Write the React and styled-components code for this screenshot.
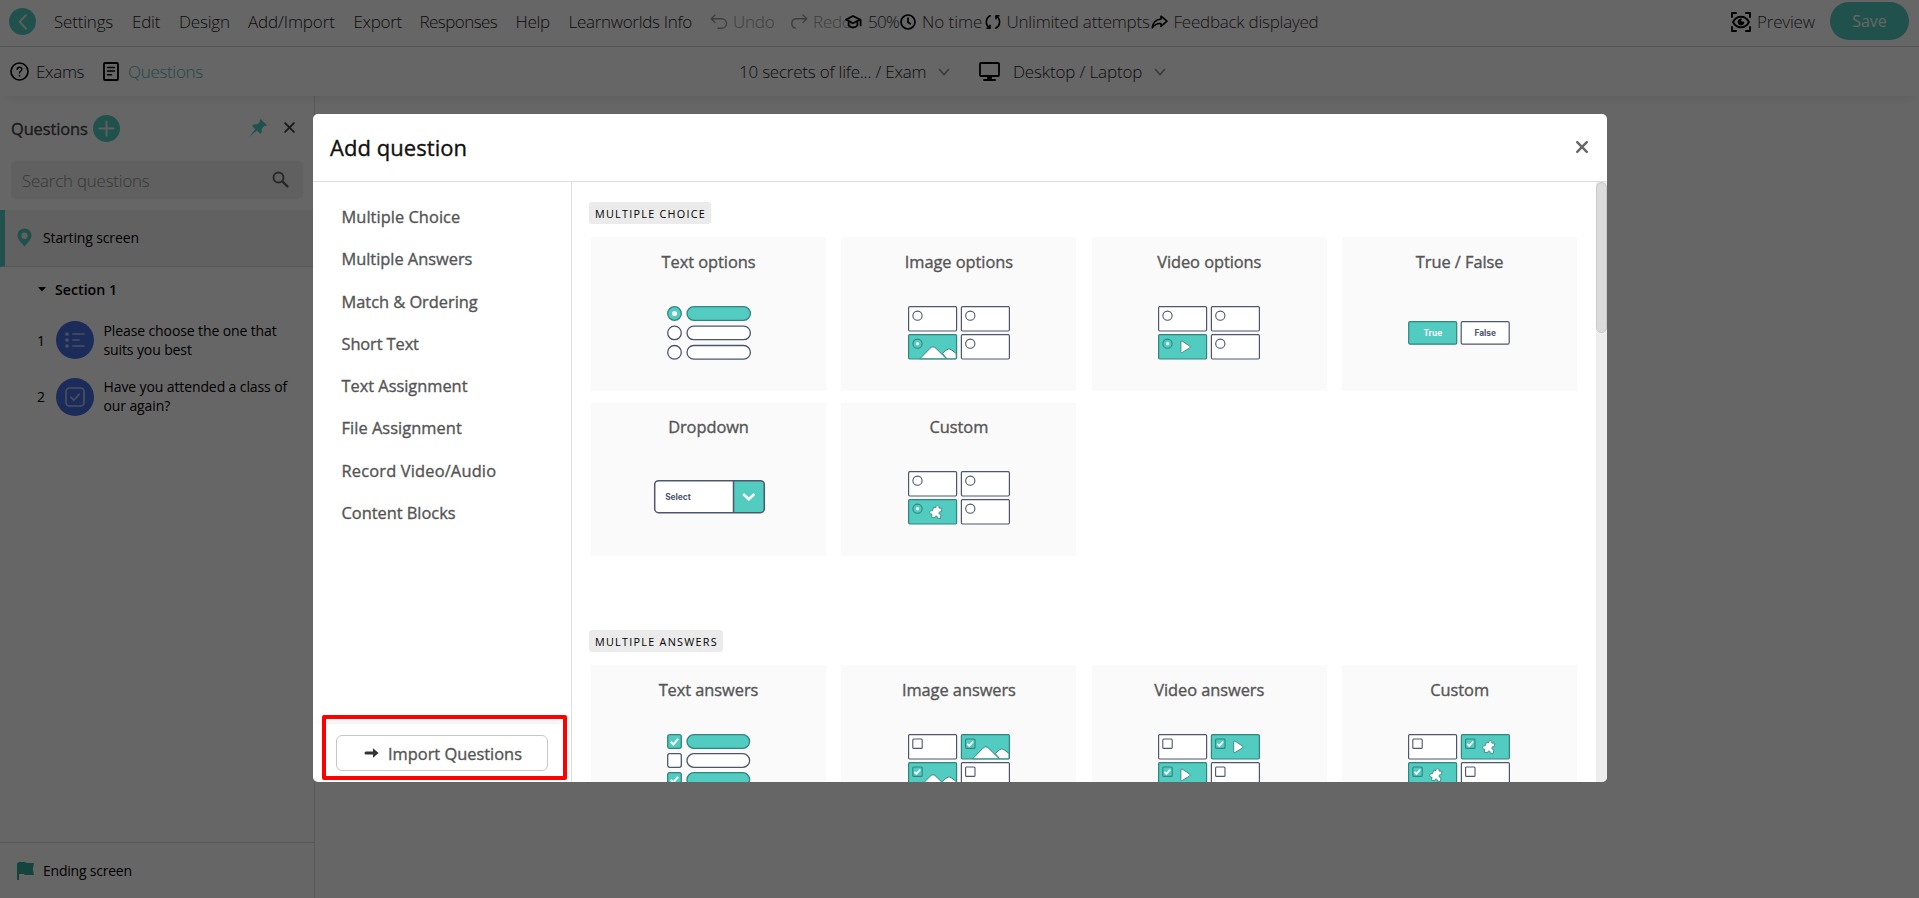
import React from "react";
import styled, { createGlobalStyle, css } from "styled-components";

const teal = "#52cbc0";
const tealDark = "#31857e";
const ink = "#4d566b";

const GlobalStyle = createGlobalStyle`
  *, *::before, *::after { box-sizing: border-box; }
  html, body { margin: 0; padding: 0; background: #fff; }
  body {
    font-family: "Open Sans", "Noto Sans", "Liberation Sans", sans-serif;
    overflow: hidden;
  }
  svg { display: block; flex: none; overflow: visible; }
`;

const medium = css`
  font-weight: 400;
  -webkit-text-stroke: 0.35px currentColor;
`;

/* ---------- page ---------- */
const Page = styled.div`
  position: relative;
  display: flex;
  flex-direction: column;
  width: 1919px;
  height: 898px;
  background: #fff;
  overflow: hidden;
`;

const TopBar = styled.header`
  display: flex;
  align-items: center;
  height: 47px;
  padding: 0 10px 3px 9px;
  border-bottom: 1px solid #d4d4d4;
  font-weight: 300;
  font-size: 17px;
`;

const RoundButton = styled.span`
  display: flex;
  flex: none;
  align-items: center;
  justify-content: center;
  width: 27px;
  height: 27px;
  border-radius: 50%;
  background: ${teal};
`;

const Menu = styled.nav`
  display: flex;
  align-items: center;
  flex: none;
  gap: 19px;
  width: 809px;
  padding-left: 18px;
`;

const MenuItem = styled.span`
  flex: none;
  width: ${(p) => p.$w}px;
  white-space: nowrap;
  letter-spacing: ${(p) => p.$track ?? -0.2}px;
  color: #1c1c1c;
`;

const HistoryItem = styled(MenuItem)`
  display: flex;
  align-items: center;
  gap: 5px;
  color: #9c9c9c;
`;

const Facts = styled.div`
  display: flex;
  align-items: center;
  flex: 1;
`;

const Fact = styled.span`
  display: flex;
  align-items: center;
  flex: none;
  gap: 6px;
  width: ${(p) => p.$w}px;
  white-space: nowrap;
  letter-spacing: ${(p) => p.$track ?? -0.2}px;
  color: #333;
  svg { color: #000; }
`;

const Preview = styled(Fact)`
  margin-right: 13px;
`;

const SaveButton = styled.button`
  flex: none;
  width: 79px;
  height: 38px;
  margin-top: -1px;
  border: 0;
  border-radius: 19px;
  background: ${teal};
  color: #fff;
  font: inherit;
  font-weight: 400;
  font-size: 16px;
`;

const SubBar = styled.div`
  position: relative;
  display: flex;
  align-items: center;
  height: 49px;
  padding-left: 10px;
  box-shadow: 0 9px 8px -7px rgba(0, 0, 0, 0.1);
  font-weight: 300;
  font-size: 17px;
`;

const Tab = styled.span`
  display: flex;
  align-items: center;
  flex: none;
  gap: ${(p) => p.$gap}px;
  width: ${(p) => p.$w}px;
  white-space: nowrap;
  letter-spacing: -0.32px;
  color: ${(p) => (p.$active ? "#55b5ad" : "#1c1c1c")};
  svg { color: #000; }
`;

const Pickers = styled.div`
  display: flex;
  align-items: center;
  margin-left: 514.5px;
`;

const Picker = styled.span`
  display: flex;
  align-items: center;
  flex: none;
  width: ${(p) => p.$w}px;
  white-space: nowrap;
  letter-spacing: ${(p) => p.$track}px;
  color: #1c1c1c;
  svg:first-child { margin-right: 13px; color: #000; }
  svg:last-child { margin-left: 12px; }
`;

const Workspace = styled.div`
  display: flex;
  flex: 1;
  min-height: 0;
`;

/* ---------- questions panel ---------- */
const Panel = styled.aside`
  display: flex;
  flex-direction: column;
  width: 315px;
  border-right: 1px solid #dcdcdc;
`;

const PanelHead = styled.div`
  display: flex;
  align-items: center;
  height: 65px;
  padding: 0 19px 0 11px;
`;

const PanelTitle = styled.span`
  ${medium}
  width: 82px;
  font-size: 16.4px;
  letter-spacing: -0.1px;
  color: #444;
`;

const PanelTools = styled.span`
  display: flex;
  align-items: center;
  gap: 17px;
  margin-left: auto;
  padding-bottom: 2px;
`;

const SearchBox = styled.div`
  display: flex;
  align-items: center;
  justify-content: space-between;
  height: 38px;
  margin: 0 11px;
  padding: 0 14px 0 11px;
  border-radius: 5px;
  background: #efefef;
  font-weight: 300;
  font-size: 16.8px;
  letter-spacing: -0.15px;
  color: #8c8c8c;
`;

const StartRow = styled.div`
  display: flex;
  align-items: center;
  gap: 11px;
  height: 57px;
  margin-top: 11px;
  padding: 0 0 2px 12px;
  border-left: 5px solid ${teal};
  border-bottom: 1px solid #d8d8d8;
  background: #f2f2f2;
  font-size: 14px;
  letter-spacing: -0.14px;
`;

const SectionRow = styled.div`
  display: flex;
  align-items: center;
  gap: 9px;
  height: 45px;
  padding-left: 38px;
  font-weight: 600;
  font-size: 14.2px;
`;

const QuestionRow = styled.div`
  display: flex;
  align-items: center;
  height: 56.5px;
  font-size: 14px;
  line-height: 19px;
  letter-spacing: -0.11px;
`;

const QuestionNumber = styled.span`
  width: 56px;
  padding-left: 37px;
`;

const QuestionIcon = styled.span`
  display: flex;
  flex: none;
  align-items: center;
  justify-content: center;
  width: 38px;
  height: 38px;
  margin-right: 9.5px;
  border-radius: 50%;
  background: #466ee0;
`;

const QuestionText = styled.span`
  width: 192px;
  margin-top: -1px;
  white-space: nowrap;
`;

const EndRow = styled.div`
  display: flex;
  align-items: center;
  gap: 9px;
  height: 56px;
  margin-top: auto;
  padding-left: 17px;
  border-top: 1px solid #dcdcdc;
  font-size: 14px;
  font-weight: 400;
  letter-spacing: -0.22px;
`;

/* ---------- dialog ---------- */
const Backdrop = styled.div`
  position: absolute;
  inset: 0;
  padding: 114px 0 0 313px;
  background: rgba(0, 0, 0, 0.6);
`;

const Dialog = styled.section`
  position: relative;
  display: flex;
  flex-direction: column;
  width: 1294px;
  height: 668px;
  border-radius: 5px;
  background: #fff;
`;

const DialogHead = styled.div`
  display: flex;
  align-items: center;
  justify-content: space-between;
  height: 68px;
  padding: 0 19px 2px 17px;
  border-bottom: 1px solid #dedede;
`;

const DialogTitle = styled.h2`
  ${medium}
  margin: 0;
  font-size: 22px;
  letter-spacing: 0.05px;
  color: #111;
`;

const DialogBody = styled.div`
  display: flex;
  flex: 1;
  min-height: 0;
`;

const Categories = styled.div`
  display: flex;
  flex-direction: column;
  width: 259px;
  border-right: 1px solid #dedede;
`;

const CategoryList = styled.ul`
  display: flex;
  flex-direction: column;
  flex: 1;
  margin: 0;
  padding: 14px 0 0 28.5px;
  list-style: none;
`;

const Category = styled.li`
  ${medium}
  height: 42.25px;
  font-size: 16.4px;
  line-height: 42px;
  letter-spacing: ${(p) => p.$track ?? 0.05}px;
  color: #555;
`;

const CategoriesFoot = styled.div`
  height: 58px;
  padding: 11px 23px 0;
  box-shadow: 0 -9px 8px -7px rgba(0, 0, 0, 0.07);
`;

const ImportButton = styled.button`
  ${medium}
  display: flex;
  align-items: center;
  gap: 9px;
  width: 212px;
  height: 36px;
  padding: 0 0 0 28px;
  border: 1px solid #c8c8c8;
  border-radius: 6px;
  background: #fff;
  font-family: inherit;
  font-size: 16.4px;
  color: #555;
`;

const Highlight = styled.div`
  position: absolute;
  left: 9px;
  top: 601px;
  width: 245px;
  height: 65px;
  border: 4px solid #fe0000;
  border-radius: 2px;
`;

const Catalog = styled.div`
  display: flex;
  flex-direction: column;
  gap: 74px;
  flex: 1;
  padding: 20px 19px 0 17px;
  overflow: hidden;
`;

const Group = styled.div`
  display: flex;
  flex-direction: column;
  align-items: flex-start;
  gap: 13px;
`;

const GroupLabel = styled.span`
  height: 22px;
  padding: 1px 5px 0 6px;
  border-radius: 3px;
  background: #ebebeb;
  font-size: 10.8px;
  line-height: 22px;
  letter-spacing: 1.27px;
  white-space: nowrap;
  color: #000;
`;

const CardGrid = styled.div`
  display: grid;
  grid-template-columns: repeat(4, 235px);
  grid-template-rows: 154px;
  grid-auto-rows: 153px;
  column-gap: 15.4px;
  row-gap: 12px;
  padding-left: 2px;
`;

const Card = styled.div`
  display: flex;
  flex-direction: column;
  align-items: center;
  background: #fafafa;
`;

const CardTitle = styled.span`
  ${medium}
  height: ${(p) => (p.$row === 0 ? 69 : 68)}px;
  padding-top: ${(p) => (p.$row === 0 ? 13 : 12)}px;
  font-size: 16.4px;
  line-height: 23px;
  letter-spacing: -0.05px;
  color: #555;
`;

const ScrollTrack = styled.div`
  width: 11px;
  border-bottom-right-radius: 5px;
  background: #ededed;
`;

const ScrollThumb = styled.div`
  height: 151px;
  border: 1px solid #c9c9c9;
  border-radius: 6px;
  background: #dbdbdb;
`;

/* ---------- small icons ---------- */
const Line = ({ w, h, sw = 1.8, children, color = "currentColor" }) => (
  <svg width={w} height={h} viewBox={`0 0 ${w} ${h}`} fill="none" stroke={color} strokeWidth={sw} strokeLinecap="round" strokeLinejoin="round">
    {children}
  </svg>
);

const Back = () => <Line w={10} h={16} sw={2} color="#e8eded"><path d="M8 1.2 1.6 7.6 8 14.6" /></Line>;
const Plus = () => <Line w={15} h={15} sw={2} color="#e8eded"><path d="M7.5.5v14M.5 7.5h14" /></Line>;
const Undo = () => <Line w={18} h={16} sw={1.4}><path d="M5 1 1.2 4.8 5 8.6M1.4 4.8h10.4a4.7 4.7 0 0 1 0 9.4H8" /></Line>;
const Redo = () => <Line w={18} h={16} sw={1.4}><path d="M13 1l3.8 3.8L13 8.6M16.6 4.8H6.2a4.7 4.7 0 0 0-1 9.2" /></Line>;
const Cap = () => <Line w={17} h={14} sw={1.8}><path d="M8 1 1 4.6l7 3.6 7-3.6zM3.6 6.2v4.2C5.6 13.2 10.4 13.2 12.4 10.4V6.2M15.6 5v5.4" /></Line>;
const Clock = () => <Line w={16} h={16} sw={1.7}><circle cx="8" cy="8" r="7" /><path d="M8 4v4.2l2.3 1.6" /></Line>;
const Cycle = () => <Line w={16} h={16} sw={1.6}><path d="M5.2 1.8A6.8 6.8 0 0 0 4.4 13.6M2 14.2h3v-3M10.6 14.2A6.8 6.8 0 0 0 11.6 2.4M14 1.8h-3v3" /></Line>;
const Share = () => <Line w={17} h={14} sw={1.6}><path d="M10 1.2l6 5-6 5.2V8.6C6.2 8.2 3.6 9.6 1.2 12.8 1.7 8.2 4.8 4.6 10 4z" /></Line>;
const Eye = () => (
  <Line w={20} h={20} sw={1.9}>
    <path d="M1 5V1h4M15 1h4v4M19 15v4h-4M5 19H1v-4" />
    <path d="M2 10c3.6-7 12.4-7 16 0-3.6 7-12.4 7-16 0z" />
    <path d="M10 7v3h3a3 3 0 1 1-3-3z" fill="currentColor" strokeWidth="0.8" />
  </Line>
);
const Help = () => (
  <Line w={19} h={19} sw={1.7}>
    <circle cx="9.5" cy="9.5" r="8.5" />
    <path d="M7.2 7.4c.2-3 4.8-2.8 4.6.1-.1 1.6-2.3 1.700-2.300 3.500" strokeWidth="1.4" />
    <circle cx="9.500" cy="13.700" r=".3" strokeWidth="1.2" />
  </Line>
);
const Sheet = () => <Line w={16} h={19} sw={1.8}><rect x="1" y="1" width="14" height="17" rx="1" /><path d="M4.5 5.500h7M4.500 9h7M4.500 12.700h4" strokeWidth="1.5" /></Line>;
const Monitor = () => (
  <Line w={21} h={19} sw={1.8}>
    <rect x="1" y="1" width="19" height="13" rx="1" />
    <path d="M5 18h11" />
    <path d="M9 15.500h3v2H9z" fill="currentColor" />
  </Line>
);
const Chevron = () => <svg width="12" height="8" viewBox="0 0 12 8" fill="none" stroke="#999" strokeWidth="1.8"><path d="M1 1l5 5.600L11 1" /></svg>;
const Pin = () => (
  <svg width="18" height="18" viewBox="0 0 18 18" fill={teal}>
    <path d="M11.500 0 18 6.200l-1.700 1.100-1-.2-2.700 2.900c.5 2 .2 3.500-1.200 4.900L7.900 11.400.3 17.900 6.300 10 2.900 6.700c1.500-1.300 3.200-1.600 5-1.100l2.900-2.700-.3-1.200z" />
  </svg>
);
const Cross = ({ size, sw, color }) => (
  <svg width={size} height={size} viewBox="0 0 12 12" stroke={color} strokeWidth={sw} strokeLinecap="round"><path d="M1.200 1.200l9.600 9.600M10.800 1.200 1.200 10.800" /></svg>
);
const Magnifier = () => <Line w={17} h={18} sw={2} color="#666"><circle cx="6.500" cy="6.500" r="5" /><path d="M10.600 10.600l4.800 4.800" strokeWidth="2.600" /></Line>;
const Marker = () => <svg width="15" height="19" viewBox="0 0 15 19" fill={teal} fillRule="evenodd"><path d="M7.500.5c4 0 7 3 7 6.800 0 4.300-4 7.700-7 11.200-3-3.500-7-6.900-7-11.200C.5 3.500 3.500.5 7.500.5zm0 4a3 3.200 0 1 0 0 6.400 3 3.200 0 0 0 0-6.400z" /></svg>;
const Caret = () => <svg width="8" height="5" viewBox="0 0 8 5"><path d="M0 0h8L4 4.600z" /></svg>;
const ListGlyph = () => (
  <svg width="20" height="16" viewBox="0 0 20 16" stroke="#b9c5e6" strokeWidth="1.700" fill="#b9c5e6" strokeLinecap="round">
    <circle cx="2" cy="2" r="1" /><circle cx="2" cy="8" r="1" /><circle cx="2" cy="14" r="1" />
    <path d="M8 2h11M8 8h6M8 14h11" />
  </svg>
);
const CheckGlyph = () => <Line w={20} h={20} sw={1.7} color="#b9c5e6"><rect x="1" y="1" width="18" height="18" rx="3.500" /><path d="M5.800 10.200l3 3 5.400-6" /></Line>;
const Flag = () => <svg width="17" height="18" viewBox="0 0 17 18" fill="#35ab9d"><path d="M2 0h6l2 1h7l-1.200 5.500L17 13H8l-1.500-1H2v6H0V1.500z" /></svg>;
const Arrow = () => <svg width="14" height="10" viewBox="0 0 14 10" fill="#333"><path d="M1 3.500h7V.3L13.600 5 8 9.700V6.500H1a1.500 1.500 0 0 1 0-3z" /></svg>;

/* ---------- card drawings ---------- */
const Tick = ({ x, y, s = 1 }) => (
  <path d={`M${x - 2.8 * s} ${y}l${2 * s} ${2.2 * s} ${3.9 * s}-${4.4 * s}`} fill="none" stroke="#fff" strokeWidth={1.7 * s} />
);

const RowsArt = ({ selected, box }) => (
  <svg width="84" height="54" viewBox="0 0 84 54" strokeWidth="1.300">
    {[0, 1, 2].map((i) => {
      const on = selected.includes(i);
      const y = i * (box ? 19 : 19.4);
      const look = { fill: on ? teal : "#fff", stroke: on ? tealDark : ink };
      return (
        <g key={i}>
          {box
            ? <rect x=".7" y={y + 0.7} width="13.600" height="13.600" rx="2" {...look} />
            : <circle cx="7.500" cy={y + 7.5} r="6.800" {...look} />}
          <rect x="20" y={y + 0.7} width={box ? 62.6 : 63.4} height="13.600" rx="6.800" {...look} />
          {on && (box ? <Tick x={7.3} y={y + 7.6} s={1.25} /> : <circle cx="7.500" cy={y + 7.5} r="2.500" fill="#fff" />)}
        </g>
      );
    })}
  </svg>
);

const Mountains = () => (
  <g fill="#fff" stroke={tealDark} strokeWidth="1">
    <path d="M34.500 19.600 38 16.200Q41 13.400 44 16.200L48.200 19.500V24.800H39z" />
    <path d="M11.800 24.800 22 14.400Q25 11.200 28 14.400L38.500 24.800z" />
  </g>
);
const Play = () => <path d="M22.900 8v9.600q0 1.600 1.500.8l7.300-4.500q1.200-.9 0-1.800l-7.300-4.900q-1.500-.8-1.500.8z" fill="#fff" stroke={tealDark} strokeWidth=".9" />;
const Puzzle = () => (
  <path
    d="M25.200 14h2.300c-.4-3 3.500-3 3.100 0H33.500v3.200c-3-.2-3 3.400 0 3.200V24.200h-3.200c.3-2.600-2.800-2.600-2.500 0h-3.300v-3.100c-3.400.5-3.400-3.700 0-3.400z"
    transform="translate(-.2 -5.400) rotate(8 28 18.500)"
    fill="#fff"
    stroke={tealDark}
    strokeWidth=".8"
  />
);
const glyphs = { image: Mountains, video: Play, custom: Puzzle };

const TilesArt = ({ selected, kind, box }) => {
  const Glyph = glyphs[kind];
  return (
    <svg width="102.600" height="54" viewBox="0 0 102.600 54">
      {[0, 1, 2, 3].map((i) => {
        const on = selected.includes(i);
        const stroke = on ? tealDark : ink;
        return (
          <g key={i} transform={`translate(${(i % 2) * 52.8} ${i > 1 ? 28 : 0})`} stroke={stroke}>
            <rect x=".6" y=".6" width="48" height="24.400" rx="1.200" fill={on ? teal : "#fff"} strokeWidth="1.200" />
            {on && <Glyph />}
            {box
              ? <rect x="4.800" y="5" width="9.400" height="9.400" rx="1" fill={on ? teal : "#fff"} strokeWidth="1.100" />
              : <circle cx="9.500" cy="9.700" r="4.600" fill={on ? teal : "#fff"} strokeWidth="1.100" />}
            {on && (box ? <Tick x={9.2} y={9.7} /> : <circle cx="9.500" cy="9.700" r="1.600" fill="#fff" stroke="none" />)}
          </g>
        );
      })}
    </svg>
  );
};

const Tiny = styled.text`
  font-family: "Inter", "Liberation Sans", sans-serif;
  font-size: 8.4px;
  font-weight: 700;
  fill: ${(p) => p.$fill};
  text-anchor: middle;
`;

const TrueFalseArt = () => (
  <svg width="102.600" height="54" viewBox="0 0 102.600 54" strokeWidth="1.200">
    <rect x=".7" y="15.600" width="48" height="22.600" rx="1.500" fill={teal} stroke={tealDark} />
    <rect x="53.200" y="15.600" width="48" height="22.600" rx="1.500" fill="#fff" stroke={ink} />
    <Tiny x="24.800" y="30" $fill="#fff">True</Tiny>
    <Tiny x="77.200" y="30" $fill={ink}>False</Tiny>
  </svg>
);

const DropdownArt = () => (
  <svg width="109.500" height="54" viewBox="0 0 109.500 54" strokeWidth="1.500">
    <path d="M79.500 9.700h26.800q4 0 4 4v24q0 4-4 4H79.500z" fill={teal} />
    <path d="M79.500 9.700H4.700q-4 0-4 4v24q0 4 4 4h74.800z" fill="#fff" />
    <rect x=".7" y="9.700" width="109.600" height="32" rx="4" fill="none" stroke={ink} />
    <path d="M79.500 9.700v32" stroke={ink} />
    <path d="M90 23.700l4.800 4.600 4.800-4.600" fill="none" stroke="#fff" strokeWidth="2.600" strokeLinecap="round" />
    <Tiny x="24" y="28.800" $fill={ink}>Select</Tiny>
  </svg>
);

const groups = [
  {
    label: "MULTIPLE CHOICE",
    cards: [
      ["Text options", <RowsArt selected={[0]} />],
      ["Image options", <TilesArt selected={[2]} kind="image" />],
      ["Video options", <TilesArt selected={[2]} kind="video" />],
      ["True / False", <TrueFalseArt />],
      ["Dropdown", <DropdownArt />],
      ["Custom", <TilesArt selected={[2]} kind="custom" />],
    ],
  },
  {
    label: "MULTIPLE ANSWERS",
    cards: [
      ["Text answers", <RowsArt selected={[0, 2]} box />],
      ["Image answers", <TilesArt selected={[1, 2]} kind="image" box />],
      ["Video answers", <TilesArt selected={[1, 2]} kind="video" box />],
      ["Custom", <TilesArt selected={[1, 2]} kind="custom" box />],
    ],
  },
];

const menu = [
  ["Settings", 59],
  ["Edit", 28],
  ["Design", 50],
  ["Add/Import", 86.5, -0.12],
  ["Export", 47, -0.3],
  ["Responses", 77, -0.55],
  ["Help", 34, -0.3],
  ["Learnworlds Info", 122.5, -0.3],
];

const categories = [
  ["Multiple Choice"],
  ["Multiple Answers", -0.02],
  ["Match & Ordering", -0.02],
  ["Short Text", -0.1],
  ["Text Assignment", -0.02],
  ["File Assignment"],
  ["Record Video/Audio", 0.18],
  ["Content Blocks", -0.02],
];

export default function App() {
  return (
    <Page>
      <GlobalStyle />
      <TopBar>
        <RoundButton><Back /></RoundButton>
        <Menu>
          {menu.map(([label, w, track]) => (
            <MenuItem key={label} $w={w} $track={track}>{label}</MenuItem>
          ))}
          <HistoryItem $w={61}><Undo />Undo</HistoryItem>
          <HistoryItem $w={60}><Redo />Redo</HistoryItem>
        </Menu>
        <Facts>
          <Fact $w={55} $track={-0.7}><Cap />50%</Fact>
          <Fact $w={84.5} $track={-0.02}><Clock />No time</Fact>
          <Fact $w={166} $track={-0.2}><Cycle />Unlimited attempts</Fact>
          <Fact $w={170} $track={-0.24}><Share />Feedback displayed</Fact>
        </Facts>
        <Preview $w={86} $track={-0.2}><Eye />Preview</Preview>
        <SaveButton>Save</SaveButton>
      </TopBar>
      <SubBar>
        <Tab $w={93} $gap={7}><Help />Exams</Tab>
        <Tab $w={121.5} $gap={9} $active><Sheet />Questions</Tab>
        <Pickers>
          <Picker $w={240} $track={-0.22}><span />10 secrets of life... / Exam<Chevron /></Picker>
          <Picker $w={190} $track={-0.14}><Monitor />Desktop / Laptop<Chevron /></Picker>
        </Pickers>
      </SubBar>
      <Workspace>
        <Panel>
          <PanelHead>
            <PanelTitle>Questions</PanelTitle>
            <RoundButton><Plus /></RoundButton>
            <PanelTools><Pin /><Cross size={11} sw={2.1} color="#444" /></PanelTools>
          </PanelHead>
          <SearchBox>Search questions<Magnifier /></SearchBox>
          <StartRow><Marker />Starting screen</StartRow>
          <SectionRow><Caret />Section 1</SectionRow>
          <QuestionRow>
            <QuestionNumber>1</QuestionNumber>
            <QuestionIcon><ListGlyph /></QuestionIcon>
            <QuestionText>Please choose the one that<br />suits you best</QuestionText>
          </QuestionRow>
          <QuestionRow>
            <QuestionNumber>2</QuestionNumber>
            <QuestionIcon><CheckGlyph /></QuestionIcon>
            <QuestionText>Have you attended a class of<br />our again?</QuestionText>
          </QuestionRow>
          <EndRow><Flag />Ending screen</EndRow>
        </Panel>
      </Workspace>
      <Backdrop>
        <Dialog>
          <DialogHead>
            <DialogTitle>Add question</DialogTitle>
            <Cross size={12} sw={2.4} color="#666" />
          </DialogHead>
          <DialogBody>
            <Categories>
              <CategoryList>
                {categories.map(([label, track]) => (
                  <Category key={label} $track={track}>{label}</Category>
                ))}
              </CategoryList>
              <CategoriesFoot>
                <ImportButton><Arrow />Import Questions</ImportButton>
              </CategoriesFoot>
            </Categories>
            <Catalog>
              {groups.map((group) => (
                <Group key={group.label}>
                  <GroupLabel>{group.label}</GroupLabel>
                  <CardGrid>
                    {group.cards.map(([title, art], i) => (
                      <Card key={title}>
                        <CardTitle $row={Math.floor(i / 4)}>{title}</CardTitle>
                        {art}
                      </Card>
                    ))}
                  </CardGrid>
                </Group>
              ))}
            </Catalog>
            <ScrollTrack><ScrollThumb /></ScrollTrack>
          </DialogBody>
          <Highlight />
        </Dialog>
      </Backdrop>
    </Page>
  );
}
